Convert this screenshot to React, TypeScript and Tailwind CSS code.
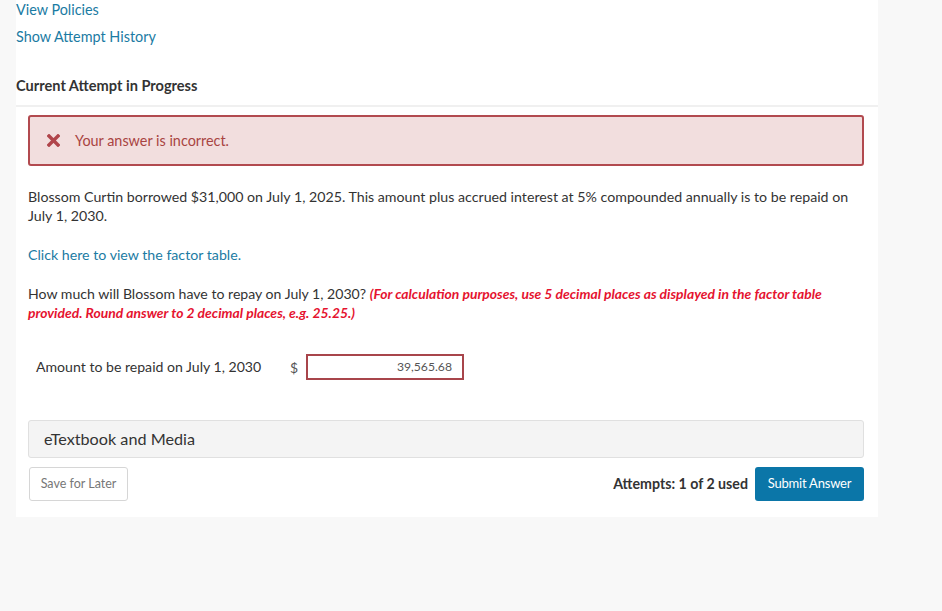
import React from "react";

export default function App() {
  return (
    <div className="min-h-screen bg-[#f8f8f8] text-[#333] font-['Lato','Liberation_Sans',sans-serif]">
      <div className="ml-[16px] w-[862px] bg-white pb-[16px]">
        <div className="border-b-2 border-[#f0f0f0] pb-[9px]">
          <div className="text-[14.4px] leading-[20px] text-[#1b7ba3]">View Policies</div>
          <div className="mt-[7px] text-[14.4px] leading-[20px] text-[#1b7ba3]">Show Attempt History</div>
          <div className="mt-[29px] text-[14.6px] leading-[20px] font-bold text-[#333]">Current Attempt in Progress</div>
        </div>
        <div className="pl-[12px] pr-[14px] pt-[8px]">
          <div className="h-[51px] flex items-center rounded-[3px] border-2 border-[#b24a4f] bg-[#f2dede] pl-[17px]">
            <svg width="13" height="13" viewBox="0 0 13 13" className="shrink-0">
              <path d="M2 2 L11 11 M11 2 L2 11" stroke="#b0454b" strokeWidth="3.4" strokeLinecap="square" />
            </svg>
            <span className="ml-[15px] text-[14.4px] text-[#a94442]">Your answer is incorrect.</span>
          </div>
          <p className="mt-[21px] text-[14.2px] leading-[19px] text-[#333]">
            Blossom Curtin borrowed $31,000 on July 1, 2025. This amount plus accrued interest at 5% compounded annually is to be repaid on July 1, 2030.
          </p>
          <div className="mt-[20px] text-[14.2px] leading-[20px] text-[#1b7ba3]">Click here to view the factor table.</div>
          <p className="mt-[19px] text-[14.1px] leading-[19px] text-[#333] pr-[30px]">
            How much will Blossom have to repay on July 1, 2030?{" "}
            <span className="font-bold italic text-[13.9px] text-[#e5132f]">
              (For calculation purposes, use 5 decimal places as displayed in the factor table provided. Round answer to 2 decimal places, e.g. 25.25.)
            </span>
          </p>
          <div className="mt-[32px] flex items-center h-[26px]">
            <span className="ml-[8px] w-[254px] text-[14.1px] text-[#333]">Amount to be repaid on July 1, 2030</span>
            <span className="text-[14px] text-[#555] w-[16px]">$</span>
            <div className="h-[26px] w-[158px] border-2 border-[#a8454b] bg-white flex items-center justify-end pr-[10px] text-[12.2px] text-[#555]">
              39,565.68
            </div>
          </div>
          <div className="mt-[40px] h-[38px] flex items-center rounded-[3px] border border-[#e0e0e0] bg-[#f4f4f4] pl-[15px] text-[16.2px] text-[#333]">
            eTextbook and Media
          </div>
          <div className="mt-[9px] flex items-center justify-between">
            <div className="ml-[1px] h-[34px] w-[99px] flex items-center justify-center rounded-[3px] border border-[#d6d6d6] bg-white text-[12.5px] text-[#777]">
              Save for Later
            </div>
            <div className="flex items-center">
              <span className="text-[14.2px] font-bold text-[#333]">Attempts: 1 of 2 used</span>
              <div className="ml-[7px] h-[34px] w-[109px] flex items-center justify-center rounded-[3px] bg-[#0b76a8] text-[13px] text-white tracking-[-0.2px]">
                Submit Answer
              </div>
            </div>
          </div>
        </div>
      </div>
    </div>
  );
}
